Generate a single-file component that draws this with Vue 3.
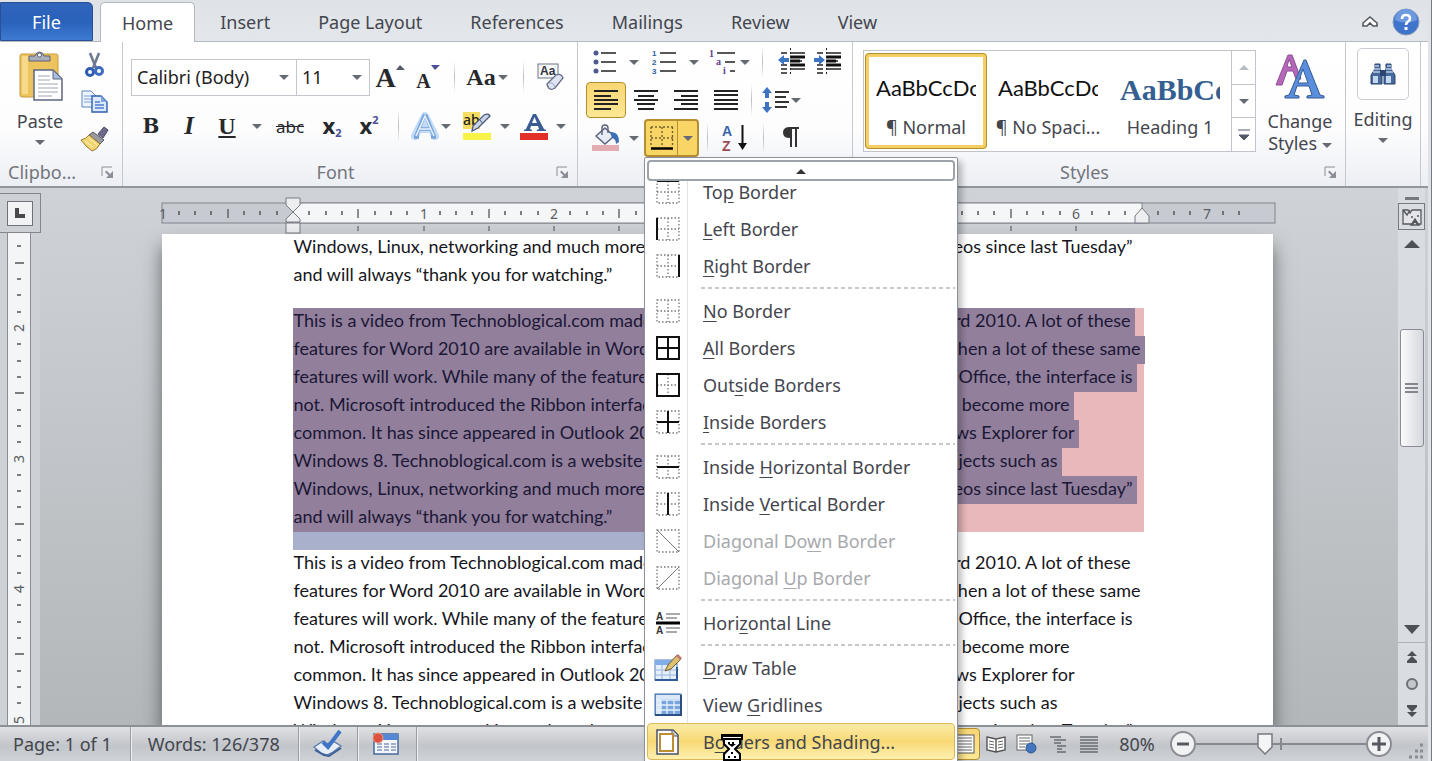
<template>
  <div class="word">
    <nav class="tabs">
      <button class="file-tab">File</button>
      <button v-for="tab in tabs" :key="tab" class="tab" :class="{ active: tab === activeTab }" @click="activeTab = tab">
        {{ tab }}
      </button>
      <div class="tabs-right">
        <button class="plain" aria-label="Minimize the Ribbon">
          <svg width="16" height="14" viewBox="0 0 16 14"><path d="M1 11V8l7-6 7 6v3h-4L8 8l-3 3z" fill="#fff" stroke="#55585f" stroke-width="1.6" /></svg>
        </button>
        <button class="plain" aria-label="Help">
          <svg width="28" height="28" viewBox="0 0 28 28">
            <circle cx="14" cy="14" r="13" fill="#3f74cc" stroke="#8c9bb8" />
            <path d="M3 12a11 11 0 0 1 22 0q-11 5-22 0" fill="#6c99e0" />
            <path d="M10 11q0-4 4-4t4 3.500q0 2-2 3.200T14 17" fill="none" stroke="#fff" stroke-width="2.600" />
            <rect x="12.500" y="19" width="3" height="3" fill="#fff" />
          </svg>
        </button>
      </div>
    </nav>

    <section class="ribbon">
      <div class="group clipboard">
        <div class="body">
          <button class="paste">
            <svg width="46" height="52" viewBox="0 0 46 52">
              <rect x="3" y="4" width="38" height="43" rx="2" fill="#edc35d" stroke="#c89a3c" />
              <path d="M5 6h6v38H5z" fill="#f6d98b" />
              <path d="M12 11V6h6q1-4 4.500-4T27 6h6v5z" fill="#a9aebd" stroke="#5c6275" />
              <circle cx="22.500" cy="5" r="2" fill="#fff" stroke="#5c6275" />
              <path d="M17 20h19l9 9v21H17z" fill="#fff" stroke="#5d6780" stroke-width="1.500" />
              <path d="M36 20v9h9z" fill="#a8bde2" stroke="#5d6780" />
              <path d="M21 26h12M21 30h12M21 34h20M21 38h20M21 42h20M21 46h14" stroke="#9da5b5" />
            </svg>
            <span>Paste</span>
            <i class="caret"></i>
          </button>
          <div class="stack">
            <button class="plain" aria-label="Cut">
              <svg width="20" height="26" viewBox="0 0 20 26">
                <path d="M5 1l6 15M14 1L8 16" stroke="#6f7a92" stroke-width="2.600" />
                <circle cx="5" cy="20" r="3.500" fill="none" stroke="#2f5cb0" stroke-width="3" />
                <circle cx="14" cy="19" r="3.500" fill="none" stroke="#3d6bbf" stroke-width="3" />
              </svg>
            </button>
            <button class="plain" aria-label="Copy">
              <svg width="28" height="24" viewBox="0 0 28 24">
                <path d="M1 1h9l5 5v11H1z" fill="#eef4fd" stroke="#5d84c4" />
                <path d="M3 6h8M3 9h8M3 12h8" stroke="#7fa2d8" />
                <path d="M11 6h9l6 6v10H11z" fill="#dce9fb" stroke="#2f5eac" stroke-width="1.400" />
                <path d="M20 6v6h6z" fill="#7ea6e4" />
                <path d="M14 12h5M14 15h9M14 18h9" stroke="#4f7fcb" stroke-width="1.400" />
              </svg>
            </button>
            <button class="plain" aria-label="Format Painter">
              <svg width="30" height="26" viewBox="0 0 30 26">
                <path d="M18 8l6-7 4 3-5 8z" fill="#6d6a8c" stroke="#4c4a6b" />
                <path d="M13 6l11 8-4 4L9 9z" fill="#9a9a9f" stroke="#56565c" />
                <path d="M9 9l11 9q-3 6-8 7Q5 20 1 14q5-1 8-5z" fill="#f3d574" stroke="#9b7c2c" />
                <path d="M5 15l8 6M9 12l8 7" stroke="#fff3bd" />
              </svg>
            </button>
          </div>
        </div>
        <div class="title"><span class="clip-title">Clipbo...</span><button class="launcher" aria-label="Clipboard options"><LauncherIcon /></button></div>
      </div>

      <div class="group font">
        <div class="body column">
          <div class="row font-top">
            <label class="combo name"><select aria-label="Font"><option>Calibri (Body)</option><option>Cambria</option></select><i class="caret"></i></label>
            <label class="combo size"><select aria-label="Font Size"><option>11</option><option>12</option></select><i class="caret"></i></label>
            <button class="tool w40 serif grow" aria-label="Grow Font">A<svg width="9" height="5"><path d="M0 5l4-5 5 5z" fill="#555a66" /></svg></button>
            <button class="tool w36 serif shrink" aria-label="Shrink Font">A<svg width="9" height="5"><path d="M0 0h9L4 5z" fill="#4c5098" /></svg></button>
            <i class="divider w16"></i>
            <button class="tool w50 serif case" aria-label="Change Case">Aa<i class="caret"></i></button>
            <i class="divider w22"></i>
            <button class="tool w34" aria-label="Clear Formatting">
              <svg width="28" height="28" viewBox="0 0 28 28">
                <rect x="1" y="1" width="20" height="14" fill="#f6f8fb" stroke="#6e7584" />
                <text x="3" y="12" font-family="Liberation Sans" font-size="12" font-weight="bold" fill="#33363e">Aa</text>
                <path d="M10 21l9-9q5-2 7 3l-8 10q-6 4-8-4z" fill="#dfe4f2" stroke="#626b85" stroke-width="1.300" />
                <path d="M12 20q5-1 6 5" fill="none" stroke="#9aa3bb" />
              </svg>
            </button>
          </div>
          <div class="row font-bottom">
            <button class="tool w40 serif bold" aria-label="Bold">B</button>
            <button class="tool w36 serif italic" aria-label="Italic">I</button>
            <button class="tool w40 serif underline" aria-label="Underline">U</button>
            <button class="tool w20" aria-label="Underline styles"><i class="caret"></i></button>
            <button class="tool w46 strike" aria-label="Strikethrough">abc</button>
            <button class="tool w38 script" aria-label="Subscript">x<sub>2</sub></button>
            <button class="tool w36 script" aria-label="Superscript">x<sup>2</sup></button>
            <i class="divider w22"></i>
            <button class="tool w32" aria-label="Text Effects">
              <svg width="28" height="30" viewBox="0 0 28 30">
                <path d="M4 25L14 5l10 20M9 18h10" fill="none" stroke="#c3dbf5" stroke-width="8" stroke-linejoin="round" stroke-linecap="round" />
                <path d="M3 26h5M20 26h5M5 25L13 5h2l8 20M9 18h10" fill="none" stroke="#78a4dc" stroke-width="3.500" />
                <path d="M5 25L14 5l9 20M9 18h10" fill="none" stroke="#e9f3fd" stroke-width="1.500" />
              </svg>
            </button>
            <button class="tool w10" aria-label="Text Effects menu"><i class="caret"></i></button>
            <button class="tool w32 marker" aria-label="Text Highlight Color">
              <svg width="30" height="30" viewBox="0 0 30 30">
                <rect x="1" y="1" width="17" height="17" fill="#f7dd62" />
                <text x="1" y="14" font-family="Noto Sans" font-size="14" font-weight="500" fill="#222">ab</text>
                <path d="M11 15l11-11q5-2 6 1L16 17l-6 3z" fill="#cbd5ea" stroke="#4c5977" stroke-width="1.300" />
                <path d="M18 9l3 4" stroke="#4c5977" />
                <rect x="1" y="22" width="28" height="7" fill="#f8f346" />
              </svg>
            </button>
            <button class="tool w24" aria-label="Highlight colors"><i class="caret"></i></button>
            <button class="tool w34" aria-label="Font Color">
              <svg width="28" height="30" viewBox="0 0 28 30">
                <path d="M4 20h8v-1l-2-1 1-3h7l1 3-2 1v1h9v-1l-2-1L16 3h-3L6 18l-2 1zM12 12l2.500-6 2.500 6z" fill="#3a5b94" />
                <rect x="0" y="22" width="28" height="7" fill="#e23029" />
              </svg>
            </button>
            <button class="tool w20" aria-label="Font colors"><i class="caret"></i></button>
          </div>
        </div>
        <div class="title"><span>Font</span><button class="launcher" aria-label="Font options"><LauncherIcon /></button></div>
      </div>

      <div class="group paragraph">
        <div class="body column">
          <div class="row">
            <button class="tool w38" aria-label="Bullets">
              <svg width="24" height="24" viewBox="0 0 24 24">
                <g fill="#4d5a8d"><circle cx="3" cy="3" r="2.500" /><circle cx="3" cy="12" r="2.500" /><circle cx="3" cy="21" r="2.500" /></g>
                <path d="M8 3h15M8 12h15M8 21h15" stroke="#222" stroke-width="1.600" />
              </svg>
            </button>
            <button class="tool w20" aria-label="Bullet library"><i class="caret"></i></button>
            <button class="tool w40" aria-label="Numbering">
              <svg width="26" height="28" viewBox="0 0 26 28">
                <g font-family="Liberation Sans" font-size="8" font-weight="bold" fill="#2e5d9f"><text x="1" y="8">1</text><text x="1" y="17">2</text><text x="1" y="26">3</text></g>
                <path d="M9 5h16M9 14h16M9 23h16" stroke="#222" stroke-width="1.600" />
              </svg>
            </button>
            <button class="tool w20" aria-label="Numbering library"><i class="caret"></i></button>
            <button class="tool w36" aria-label="Multilevel List">
              <svg width="28" height="28" viewBox="0 0 28 28">
                <g font-family="Liberation Serif" font-size="10" font-weight="bold" fill="#5b3f8f"><text x="1" y="9">1</text><text x="8" y="17">a</text><text x="15" y="26">i</text></g>
                <path d="M9 5h18M17 14h10M22 23h5" stroke="#222" stroke-width="1.600" />
              </svg>
            </button>
            <button class="tool w10" aria-label="List library"><i class="caret"></i></button>
            <i class="divider w24"></i>
            <button v-for="dir in ['Decrease', 'Increase']" :key="dir" class="tool w36" :aria-label="dir + ' Indent'">
              <svg width="28" height="28" viewBox="0 0 28 28">
                <path d="M3 5h6M12 5h15M14 13h10M12 21h15M3 21h6M3 17h6M3 25h6" stroke="#222" stroke-width="1.600" />
                <path d="M12 9h15M12 13h10M12 17h15" stroke="#111" stroke-width="2.800" />
                <path d="M12.500 0v28" stroke="#222" stroke-dasharray="2 2" />
                <path v-if="dir === 'Decrease'" d="M0 12l6-5v3h5v4H6v3z" fill="#3d74c2" />
                <path v-else d="M11 12L5 7v3H0v4h5v3z" fill="#3d74c2" />
              </svg>
            </button>
          </div>
          <div class="row">
            <button v-for="(d, name) in aligns" :key="name" class="tool w40" :class="{ checked: name === 'Left' }" :aria-label="'Align ' + name">
              <svg width="26" height="22" viewBox="0 0 26 22"><path :d="d" stroke="#222" stroke-width="2" /></svg>
            </button>
            <i class="divider w10"></i>
            <button class="tool w50 spacing" aria-label="Line Spacing">
              <svg width="28" height="28" viewBox="0 0 28 28">
                <path d="M5 1l5 6H7v5H3V7H0zM5 27l5-6H7v-5H3v5H0z" fill="#3d74c2" />
                <path d="M13 6h14M13 11h11M13 16h14M13 21h12" stroke="#333" stroke-width="1.800" />
              </svg>
              <i class="caret"></i>
            </button>
          </div>
          <div class="row">
            <button class="tool w40" aria-label="Shading">
              <svg width="28" height="28" viewBox="0 0 28 28">
                <rect x="0" y="21" width="27" height="6" fill="#e3acb0" />
                <path d="M4 12l9-8 9 8-9 8z" fill="#e8ecf4" stroke="#59617a" stroke-width="1.400" />
                <path d="M10 11V4q0-3 3-3t3 3v5" fill="none" stroke="#59617a" stroke-width="1.400" />
                <path d="M18 8q9-1 9 10l-3 2q0-5-4-6z" fill="#3c6fb8" />
              </svg>
            </button>
            <button class="tool w16" aria-label="Shading colors"><i class="caret"></i></button>
            <div class="border-split">
              <button class="split-main" aria-label="Bottom Border">
                <svg width="24" height="24" viewBox="0 0 24 24">
                  <path d="M1 1h22M1 12h22M1 1v20M12 1v20M22.500 1v20" stroke="#6d6330" stroke-width="1.400" stroke-dasharray="2 2" />
                  <path d="M1 22.500h22" stroke="#000" stroke-width="2.500" />
                </svg>
              </button>
              <button class="split-arrow" aria-label="Border menu" @click="menuOpen = !menuOpen"><i class="caret"></i></button>
              <div v-if="menuOpen" class="menu">
                <button class="scroll-up" aria-label="Scroll up"><svg width="10" height="6"><path d="M0 6l5-5 5 5z" fill="#333" /></svg></button>
                <div class="menu-clip">
                  <ul>
                    <template v-for="item in menuItems" :key="item.text">
                      <li v-if="item.sep" class="sep" role="separator"></li>
                      <li>
                        <button class="item" :class="{ hot: item.hot }" :disabled="item.disabled">
                          <span class="item-icon">
                            <svg v-if="item.solid !== undefined" width="24" height="24" viewBox="0 0 24 24">
                              <path v-if="!item.full" :d="item.disabled ? boxDots : gridDots" fill="none" stroke="#777" stroke-width="1.300" stroke-dasharray="1.500 2" />
                              <path :d="item.solid" fill="none" :stroke="item.disabled ? '#777' : '#111'" :stroke-width="item.disabled ? 1 : 2" />
                            </svg>
                            <svg v-else-if="item.icon === 'line'" width="26" height="24" viewBox="0 0 26 24">
                              <g font-family="Liberation Sans" font-size="10" font-weight="bold" fill="#333"><text x="1" y="9">A</text><text x="1" y="23">A</text></g>
                              <path d="M11 3h14M11 7h11M11 17h14M11 21h11" stroke="#555" stroke-width="1.200" />
                              <path d="M1 12h24" stroke="#000" stroke-width="3" />
                            </svg>
                            <svg v-else-if="item.icon === 'draw'" width="28" height="28" viewBox="0 0 28 28">
                              <rect x="1" y="6" width="22" height="20" fill="#e5eefb" stroke="#5f7eae" />
                              <path d="M1 6h22v5H1z" fill="#81aee8" />
                              <path d="M1 16h22M1 21h22M8 11v15M16 11v15" stroke="#9cb6dc" />
                              <path d="M1 26h22V13" fill="none" stroke="#315b96" stroke-width="2" />
                              <path d="M11 17l3-6L23 1l4 4-10 10z" fill="#dec070" stroke="#6f5d35" />
                              <path d="M22 2l2-2 4 4-2 2z" fill="#c57a7a" />
                            </svg>
                            <svg v-else-if="item.icon === 'grid'" width="28" height="24" viewBox="0 0 28 24">
                              <rect x="1" y="1" width="26" height="21" fill="#79a5df" stroke="#426a9f" />
                              <path d="M2 2h24v4H2zM2 2h5v19H2z" fill="#dbe8f8" />
                              <path d="M7 7v14M13 7v14M20 7v14M2 7h24M2 12h24M2 17h24" stroke="#e4effb" stroke-width="1.300" />
                              <path d="M1 22h26V2" fill="none" stroke="#294f85" stroke-width="2" />
                            </svg>
                            <svg v-else width="24" height="26" viewBox="0 0 24 26">
                              <path d="M1 1h16l5 5v19H1z" fill="#fdfdfd" stroke="#4a5068" stroke-width="1.500" />
                              <path d="M16 1v6h6" fill="#cfd6e6" stroke="#4a5068" />
                              <rect x="4" y="5" width="13" height="17" fill="#fff" stroke="#bd8d33" stroke-width="2" />
                            </svg>
                          </span>
                          <span class="item-text">{{ item.text.split('_')[0] }}<u>{{ item.text.split('_')[1][0] }}</u>{{ item.text.split('_')[1].slice(1) }}</span>
                        </button>
                      </li>
                    </template>
                  </ul>
                </div>
                <svg class="hourglass" width="24" height="30" viewBox="0 0 24 30">
                  <path d="M2 2h20v4h-2v5l-5 5 5 5v6H4v-6l5-5-5-5V6H2z" fill="#fff" stroke="#000" stroke-width="2" />
                  <path d="M2 3h20M5 6h14" stroke="#000" stroke-width="2" />
                  <path d="M8 9h2v2h2V9h2v2h2l-4 3-4-3zM11 19h2v2h-2zM8 23h2v2H8zM14 23h2v2h-2z" fill="#000" />
                </svg>
              </div>
            </div>
            <i class="divider w16"></i>
            <button class="tool w40" aria-label="Sort">
              <svg width="28" height="30" viewBox="0 0 28 30">
                <g font-family="Liberation Sans" font-size="14" font-weight="bold"><text x="1" y="13" fill="#3a66ad">A</text><text x="1" y="28" fill="#9d4a50">Z</text></g>
                <path d="M21.500 2v20" stroke="#111" stroke-width="2" /><path d="M17 20h9l-4.500 7z" fill="#111" />
              </svg>
            </button>
            <i class="divider w16"></i>
            <button class="tool w40" aria-label="Show paragraph marks">
              <svg width="18" height="24" viewBox="0 0 18 24"><path d="M8 12Q1 12 1 6.500T8 1h9v2h-2v18h-2V3h-3v18H8z" fill="#333" /></svg>
            </button>
          </div>
        </div>
      </div>

      <div class="group styles">
        <div class="body">
          <div class="gallery">
            <button class="style checked"><span class="sample">AaBbCcDc</span><span>¶ Normal</span></button>
            <button class="style"><span class="sample">AaBbCcDc</span><span>¶ No Spaci...</span></button>
            <button class="style"><span class="sample heading">AaBbCc</span><span>Heading 1</span></button>
            <div class="gallery-nav">
              <button aria-label="Row up" disabled><svg width="10" height="5"><path d="M0 5l5-5 5 5z" fill="#b9bdc4" /></svg></button>
              <button aria-label="Row down"><i class="caret"></i></button>
              <button aria-label="More styles"><svg width="12" height="12"><path d="M0 1h12M1 6h10l-5 5z" fill="#555a66" stroke="#555a66" stroke-width="1" /></svg></button>
            </div>
          </div>
          <button class="change">
            <svg width="52" height="50" viewBox="0 0 52 50">
              <path d="M2 33L14 3h4l9 24h-5l-3-8h-6l-5 14zM13 15h5l-3-8z" fill="#b568b8" stroke="#8e4c98" />
              <path d="M11 46v-2l4-1L30 8h2l14 35 4 1v2H33v-2l5-1-3-9H23l-3 9 5 1v2zM24 31h10l-5-14z" fill="#5b8edc" stroke="#345a94" />
            </svg>
            <span>Change</span>
            <span>Styles <i class="caret"></i></span>
          </button>
        </div>
        <div class="title"><span>Styles</span><button class="launcher" aria-label="Styles options"><LauncherIcon /></button></div>
      </div>

      <div class="group editing">
        <button class="edit">
          <span class="edit-icon">
            <svg width="28" height="26" viewBox="0 0 28 26">
              <path d="M6 3h5v5l2 6v9H2v-9l4-6zM17 3h5v5l4 6v9H15v-9l2-6z" fill="#48699b" stroke="#2b4672" />
              <rect x="11" y="9" width="6" height="6" fill="#2b4672" />
              <path d="M4 15h5v7H4zM17 15h5v7h-5z" fill="#c6d8f0" />
              <path d="M5 8h6M17 8h6M6 5h4M18 5h4M4 11h7M17 11h7" stroke="#b5c8e4" stroke-width="1.300" />
            </svg>
          </span>
          <span>Editing</span>
          <i class="caret"></i>
        </button>
      </div>
    </section>

    <main class="workspace">
      <div class="left-bar">
        <button class="tab-stop" aria-label="Tab selector">
          <span><svg width="12" height="12"><path d="M3 1v8h8" fill="none" stroke="#4a4a4e" stroke-width="4" /></svg></span>
        </button>
        <svg class="v-ruler" width="24" height="493">
          <template v-for="n in 31" :key="n">
            <text v-if="(n + 2) % 8 === 0" :transform="`translate(16 ${vPos(n) + 4}) rotate(-90)`">{{ (n + 2) / 8 + 1 }}</text>
            <path v-else-if="(n + 2) % 4 === 0" :d="`M7 ${vPos(n)}h9`" stroke="#555" stroke-width="1.500" />
            <path v-else :d="`M9 ${vPos(n)}h4`" stroke="#555" stroke-width="1.500" />
          </template>
        </svg>
      </div>

      <div class="canvas">
        <div class="sheet">
          <svg class="h-ruler" height="46">
            <rect x="0" y="15" width="1113" height="20" fill="#c7cbd1" stroke="#80848b" />
            <rect x="131" y="15" width="849" height="20" fill="#f5f6f8" stroke="#80848b" />
            <template v-for="n in 67" :key="n">
              <text v-if="(n - 9) % 8 === 0 && n !== 9" :x="hPos(n)" y="31">{{ Math.abs((n - 9) / 8) }}</text>
              <path v-else-if="(n - 9) % 4 === 0 && n !== 9" :d="`M${hPos(n)} 21v9`" stroke="#555" stroke-width="1.300" />
              <path v-else-if="n !== 9 && n !== 61" :d="`M${hPos(n)} 23v4`" stroke="#555" stroke-width="1.500" />
            </template>
            <path v-for="n in 12" :key="'t' + n" :d="`M${hPos(9 + n * 4)} 38v5`" stroke="#6a6d73" stroke-width="1.300" />
            <path d="M124 10h14v7l-7 7-7-7zM131 24l7 7v3h-14v-3z" fill="#eceef0" stroke="#777b82" />
            <rect x="124" y="35" width="14" height="10" fill="#eceef0" stroke="#777b82" />
            <path d="M980 20l7 8v7h-14v-7z" fill="#eceef0" stroke="#777b82" />
          </svg>
          <article class="page">
            <div class="para">
              <p v-for="line in lines.slice(6)" :key="line.left" class="line" :style="{ width: line.width + 'px' }"><span>{{ line.left }}</span><span>{{ line.right }}</span></p>
            </div>
            <div class="para shaded">
              <p v-for="line in lines" :key="line.left" class="line" :style="{ width: line.width + 'px' }"><span>{{ line.left }}</span><span>{{ line.right }}</span></p>
            </div>
            <div class="gap-selected"></div>
            <div class="para">
              <p v-for="line in lines" :key="line.left" class="line" :style="{ width: line.width + 'px' }"><span>{{ line.left }}</span><span>{{ line.right }}</span></p>
            </div>
          </article>
        </div>
      </div>

      <div class="scroll">
        <i class="splitter"></i>
        <button class="ruler-toggle" aria-label="View Ruler">
          <svg width="22" height="22" viewBox="0 0 22 22"><path d="M2 18V4h5l2 3 2-3h9v14h-4l-2-3-2 3zM2 4l4 5 3-5M10 19l4-6 4 6zM10 11h2M16 10h2" fill="#e3e5e8" stroke="#55585f" stroke-width="1.300" /></svg>
        </button>
        <button class="step" aria-label="Scroll up"><svg width="16" height="9"><path d="M0 9l8-8 8 8z" fill="#4d5057" /></svg></button>
        <div class="track"><div class="thumb"><i></i><i></i><i></i></div></div>
        <button class="step" aria-label="Scroll down"><svg width="16" height="9"><path d="M0 0h16L8 9z" fill="#4d5057" /></svg></button>
        <div class="browse">
          <button class="step" aria-label="Previous Page"><svg width="10" height="12"><path d="M0 5l5-5 5 5zM0 10l5-5 5 5zM0 10h10v2H0z" fill="#4d5057" /></svg></button>
          <button class="step" aria-label="Select Browse Object"><svg width="14" height="14"><circle cx="7" cy="7" r="5" fill="#c3c6ca" stroke="#6d7076" stroke-width="2" /></svg></button>
          <button class="step" aria-label="Next Page"><svg width="10" height="12"><path d="M0 0h10v2H0zM0 2h10L5 7zM0 7h10l-5 5z" fill="#4d5057" /></svg></button>
        </div>
      </div>
    </main>

    <footer class="status">
      <button class="cell page-count">Page: 1 of 1</button>
      <button class="cell words">Words: 126/378</button>
      <button class="cell icon-cell" aria-label="Proofing">
        <svg width="30" height="28" viewBox="0 0 30 28">
          <path d="M1 17l9-6 4 3 6-3 8 5-8 6-6 3-6-2z" fill="#e8eef7" stroke="#5b78a8" stroke-width="1.300" />
          <path d="M2 20l9 5 5 1 12-8" fill="none" stroke="#3d6096" stroke-width="2" />
          <path d="M10 12l5 5L27 1" fill="none" stroke="#3f74c6" stroke-width="4" />
        </svg>
      </button>
      <button class="cell icon-cell" aria-label="Macro recording">
        <svg width="28" height="24" viewBox="0 0 28 24">
          <rect x="2" y="2" width="24" height="20" fill="#f4f7fc" stroke="#48699c" stroke-width="1.500" />
          <path d="M2 2h24v6H2z" fill="#5288d6" />
          <path d="M5 12h5M12 12h5M19 12h5M5 15h5M12 15h5M19 15h5M5 18h5M12 18h5M19 18h5" stroke="#8398bb" stroke-width="1.500" />
          <circle cx="6" cy="6" r="5" fill="#dd5140" stroke="#f09a80" />
        </svg>
      </button>
      <div class="status-right">
        <button class="view checked" aria-label="Print Layout"><svg width="20" height="20"><rect x="1" y="1" width="18" height="18" fill="#fff" stroke="#555" /><path d="M3 4h14M3 7h14M3 10h14M3 13h14M3 16h14" stroke="#666" /></svg></button>
        <button class="view" aria-label="Full Screen Reading"><svg width="20" height="20"><path d="M1 3l9 2 9-2v13l-9 2-9-2zM10 5v13" fill="#fff" stroke="#555" stroke-width="1.400" /><path d="M3 7l5 1M3 10l5 1M3 13l5 1M12 8l5-1M12 11l5-1M12 14l5-1" stroke="#666" /></svg></button>
        <button class="view" aria-label="Web Layout"><svg width="22" height="20"><rect x="1" y="1" width="15" height="15" fill="#fff" stroke="#666" /><path d="M3 4h11M3 7h11M3 10h9M3 13h6" stroke="#666" /><circle cx="15" cy="14" r="5" fill="#4474bd" stroke="#315894" /></svg></button>
        <button class="view" aria-label="Outline"><svg width="18" height="18"><path d="M1 2h11M5 5h12M5 8h7M8 11h9M8 14h5M8 17h9" stroke="#6a6d73" stroke-width="1.400" /></svg></button>
        <button class="view" aria-label="Draft"><svg width="18" height="18"><path d="M0 2h18M0 5h18M0 8h18M0 11h18M0 14h18M0 17h18" stroke="#6a6d73" stroke-width="1.400" /></svg></button>
        <button class="percent">{{ zoom }}%</button>
        <button class="round" aria-label="Zoom Out"><svg width="12" height="12"><path d="M0 6h12" stroke="#55585f" stroke-width="3" /></svg></button>
        <input v-model="zoom" type="range" min="10" max="187" aria-label="Zoom">
        <button class="round" aria-label="Zoom In"><svg width="14" height="14"><path d="M0 7h14M7 0v14" stroke="#55585f" stroke-width="3" /></svg></button>
        <svg class="grip" width="18" height="18"><path d="M14 2h3M9 8h3M14 8h3M3 14h3M9 14h3M14 14h3" stroke="#8b8f95" stroke-width="3" /></svg>
      </div>
    </footer>
  </div>
</template>

<script setup>
import { h, ref } from 'vue'

const tabs = ['Home', 'Insert', 'Page Layout', 'References', 'Mailings', 'Review', 'View']
const activeTab = ref('Home')
const menuOpen = ref(true)
const zoom = ref(80)

// small corner arrow in the group titles
const LauncherIcon = () => h('svg', { width: 13, height: 13 }, [
  h('path', { d: 'M1 10V1h10', fill: 'none', stroke: '#8b8e96' }),
  h('path', { d: 'M12 5v7H5l2.500-2.500L4 6l1.500-1.500L9 8z', fill: '#8b8e96' })
])

const aligns = {
  Left: 'M1 2h24M1 7h17M1 11h24M1 15h24M1 20h17',
  Center: 'M1 2h24M5 7h16M1 11h24M4 15h18M5 20h16',
  Right: 'M1 2h24M8 7h17M1 11h24M8 15h17M1 20h24',
  Justify: 'M1 2h24M1 6h24M1 11h24M1 15h24M1 20h24'
}

const boxDots = 'M1 1h22v22H1z'
const gridDots = 'M1 1h22v22H1zM1 12h22M12 1v22'

// the letter after "_" is the access key
const menuItems = [
  { text: 'To_p Border', solid: 'M1 1h22' },
  { text: '_Left Border', solid: 'M1 1v22' },
  { text: '_Right Border', solid: 'M23 1v22' },
  { text: '_No Border', solid: '', sep: true },
  { text: '_All Borders', solid: 'M1 1h22v22H1zM1 12h22M12 1v22', full: true },
  { text: 'Out_side Borders', solid: 'M1 1h22v22H1z' },
  { text: '_Inside Borders', solid: 'M1 12h22M12 1v22' },
  { text: 'Inside _Horizontal Border', solid: 'M1 12h22', sep: true },
  { text: 'Inside _Vertical Border', solid: 'M12 1v22' },
  { text: 'Diagonal Do_wn Border', solid: 'M1 1l22 22', disabled: true },
  { text: 'Diagonal _Up Border', solid: 'M23 1L1 23', disabled: true },
  { text: 'Hori_zontal Line', icon: 'line', sep: true },
  { text: '_Draw Table', icon: 'draw', sep: true },
  { text: 'View _Gridlines', icon: 'grid' },
  { text: 'B_orders and Shading...', icon: 'page', hot: true }
]

const lines = [
  { left: 'This is a video from Technoblogical.com made', right: 'Word 2010. A lot of these', width: 842 },
  { left: 'features for Word 2010 are available in Word', right: 'then a lot of these same', width: 852 },
  { left: 'features will work. While many of the features', right: 'Office, the interface is', width: 844 },
  { left: 'not. Microsoft introduced the Ribbon interface', right: 'become more', width: 781 },
  { left: 'common. It has since appeared in Outlook 2010', right: 'Windows Explorer for', width: 786 },
  { left: 'Windows 8. Technoblogical.com is a website', right: 'subjects such as', width: 769 },
  { left: 'Windows, Linux, networking and much more', right: 'videos since last Tuesday”', width: 844 },
  { left: 'and will always “thank you for watching.”', right: '', width: 400 }
]

// rulers: one inch is 130.5px, ticks every eighth
function hPos(n) {
  return Math.round(131 + (n - 9) * 130.5 / 8)
}
function vPos(n) {
  return Math.round(95 + (n - 6) * 130.5 / 8)
}
</script>

<style>
body {
  overflow: hidden;
}
</style>

<style scoped>
* {
  box-sizing: border-box;
}

.word {
  display: flex;
  flex-direction: column;
  height: 100vh;
  overflow: hidden;
  padding-right: 4px;
  background: linear-gradient(to left, #777b83 1px, #dfe3e8 1px);
  font-family: "Noto Sans", "Open Sans", sans-serif;
  font-size: 18px;
  color: #44464e;
}

button {
  font: inherit;
  color: inherit;
  padding: 0;
  border: 0;
  background: none;
}

svg {
  display: block;
  flex: none;
  overflow: visible;
}

.caret {
  display: inline-block;
  flex: none;
  border: 5px solid transparent;
  border-top-color: #666a72;
  border-bottom: 0;
}

/* tabs */
.tabs {
  display: flex;
  flex: 0 0 42px;
  gap: 2px;
  padding-top: 2px;
  background: linear-gradient(#dfe2e6, #e3e6ea);
  border-bottom: 1px solid #b4b8bf;
}

.file-tab {
  width: 93px;
  margin-right: 5px;
  border: 1px solid #2a4f92;
  border-radius: 0 5px 0 0;
  background: linear-gradient(#3065bb, #2a61b9 50%, #3d7bd2);
  color: #fff;
}

.tab {
  padding: 0 22px;
  border: 1px solid transparent;
  border-bottom: 0;
}

.tab.active {
  margin-bottom: -1px;
  padding: 0 21px;
  border-color: #b4b8bf;
  border-radius: 5px 5px 0 0;
  background: #fff;
}

.tabs-right {
  display: flex;
  align-items: center;
  gap: 14px;
  margin-left: auto;
  padding-right: 8px;
}

/* ribbon */
.ribbon {
  display: flex;
  flex: 0 0 146px;
  border-bottom: 2px solid #92969d;
  background: linear-gradient(#fff, #fdfdfe 60%, #eceff4);
}

.group {
  display: flex;
  flex-direction: column;
  border-right: 1px solid #c5c8ce;
}

.body {
  display: flex;
  height: 116px;
}

.body.column {
  flex-direction: column;
}

.title {
  display: flex;
  align-items: center;
  height: 28px;
  color: #73757c;
}

.title span {
  flex: 1;
  text-align: center;
}

.title .clip-title {
  text-align: left;
}

.launcher {
  margin-right: 8px;
}

.clipboard {
  flex: 0 0 123px;
}

.clipboard .title {
  padding-left: 8px;
}

.paste {
  display: flex;
  flex-direction: column;
  align-items: center;
  width: 80px;
  padding-top: 8px;
  line-height: 26px;
}

.paste svg {
  margin-bottom: 6px;
}

.paste .caret {
  margin-top: 6px;
}

.stack {
  display: flex;
  flex-direction: column;
  align-items: center;
  gap: 12px;
  padding: 10px 0 0;
  width: 30px;
}

.row {
  display: flex;
  align-items: center;
  height: 38px;
}

.tool {
  display: flex;
  align-items: center;
  justify-content: center;
  flex: none;
  height: 36px;
  color: #26282c;
}

.w10 { width: 10px; }
.w16 { width: 16px; }
.w20 { width: 20px; }
.w22 { width: 22px; }
.w24 { width: 24px; }
.w32 { width: 32px; }
.w34 { width: 34px; }
.w36 { width: 36px; }
.w38 { width: 38px; }
.w40 { width: 40px; }
.w46 { width: 46px; }
.w50 { width: 50px; }

.divider {
  flex: none;
  height: 32px;
  background: linear-gradient(transparent, #b9bcc3, transparent) center / 1px 100% no-repeat;
}

.font {
  flex: 0 0 455px;
  padding-left: 8px;
}

.font .title {
  margin-left: -16px;
}

.font-top {
  margin-top: 16px;
}

.font-bottom {
  margin-top: 11px;
}

.combo {
  display: flex;
  align-items: center;
  height: 37px;
  border: 1px solid #c3c6cc;
  background: #fff;
}

.combo.name {
  width: 166px;
}

.combo.size {
  width: 73px;
  border-left: 0;
}

.combo select {
  flex: 1;
  width: 100%;
  min-width: 0;
  padding: 0 0 0 5px;
  border: 0;
  appearance: none;
  background: none;
  font: inherit;
  color: #222;
}

.combo .caret {
  margin-right: 7px;
}

.serif {
  font-family: "Liberation Serif", serif;
  font-weight: bold;
}

.grow {
  align-items: flex-start;
  font-size: 28px;
  line-height: 38px;
}

.shrink {
  align-items: flex-start;
  font-size: 20px;
  line-height: 44px;
}

.grow svg,
.shrink svg {
  margin-top: 6px;
}

.case {
  font-size: 24px;
  gap: 2px;
}

.bold {
  font-family: "DejaVu Serif", serif;
  font-size: 20px;
}

.italic {
  font-size: 25px;
  font-style: italic;
}

.underline {
  font-size: 24px;
  text-decoration: underline;
}

.strike {
  font-size: 17px;
  text-decoration: line-through;
}

.script {
  align-items: baseline;
  font-size: 22px;
  font-weight: bold;
  line-height: 34px;
}

.script sub,
.script sup {
  font-size: 11px;
  line-height: 1;
  color: #4a4f96;
}

.script sup {
  align-self: flex-start;
  margin-top: 6px;
}

.script sub {
  align-self: flex-end;
  margin-bottom: 6px;
}

.marker {
  margin-left: 10px;
}

.paragraph {
  flex: 0 0 275px;
  padding: 1px 0 0 8px;
}

.checked {
  border: 1px solid #b48e32;
  border-radius: 4px;
  background: linear-gradient(#f8d673, #fbe08a 60%, #fde892);
}

.spacing {
  gap: 1px;
}

.border-split {
  position: relative;
  z-index: 10;
  display: flex;
  width: 55px;
  height: 38px;
  margin-left: 2px;
  border: 2px solid #b48e32;
  border-radius: 4px;
  background: #f9d566;
}

.split-main {
  display: flex;
  flex: 1;
  align-items: center;
  justify-content: center;
  border-right: 1px solid #b48e32;
}

.split-arrow {
  display: flex;
  align-items: center;
  justify-content: center;
  width: 19px;
}

/* border menu, hangs below its button */
.menu {
  position: absolute;
  top: 36px;
  left: -2px;
  width: 314px;
  padding: 2px;
  border: 1px solid #8d9199;
  border-radius: 2px;
  background: #fff;
  box-shadow: 4px 4px 6px rgba(0, 0, 0, 0.25);
}

.scroll-up {
  display: flex;
  align-items: center;
  justify-content: center;
  width: 100%;
  height: 21px;
  border: 2px solid #9ea2aa;
  border-radius: 4px;
  background: #fff;
}

.menu-clip {
  overflow: hidden;
  background: linear-gradient(to right, transparent 40px, #e1e3e6 40px, #e1e3e6 41px, transparent 41px);
}

.menu-clip ul {
  margin: -8px 0 0;
  padding: 0;
  list-style: none;
}

.sep {
  height: 8px;
  margin-left: 54px;
  background: repeating-linear-gradient(to right, #c5c8cd 0 4px, transparent 4px 7px) left 3px / 100% 2px no-repeat;
}

.item {
  display: flex;
  align-items: center;
  width: 100%;
  height: 37px;
  border: 1px solid transparent;
  border-radius: 4px;
  text-align: left;
}

.item:disabled {
  color: #a7a9ad;
}

.item.hot {
  border-color: #dcb758;
  background: linear-gradient(#fbeaa8, #f8da75 50%, #fdf0b0);
}

.item-icon {
  display: flex;
  justify-content: center;
  width: 40px;
}

.item-text {
  padding-left: 15px;
}

.item-text u {
  text-underline-offset: 3px;
}

.hourglass {
  position: absolute;
  left: 75px;
  bottom: -1px;
}

/* styles */
.styles {
  flex: 1 0 auto;
}

.styles .title {
  margin-left: -8px;
}

.styles .body {
  padding: 8px 0 0 10px;
}

.gallery {
  display: flex;
  height: 102px;
  padding-left: 1px;
  border: 1px solid #c1c4ca;
  background: #fff;
}

.style {
  display: flex;
  flex-direction: column;
  align-items: center;
  justify-content: space-between;
  width: 122px;
  margin: 2px 0;
  padding: 22px 0 9px;
  line-height: 26px;
  white-space: nowrap;
}

.style.checked {
  padding: 18px 0 5px;
  border: 4px solid #f4cf62;
  outline: 1px solid #b48e32;
  outline-offset: -1px;
  background: #fff;
}

.sample {
  width: 100px;
  overflow: hidden;
  font-family: Lato, sans-serif;
  font-size: 22px;
  text-align: left;
  color: #111;
}

.sample.heading {
  font-family: "Liberation Serif", serif;
  font-size: 30px;
  font-weight: bold;
  line-height: 30px;
  color: #365f91;
}

.gallery-nav {
  display: flex;
  flex-direction: column;
  width: 24px;
  border-left: 1px solid #c1c4ca;
}

.gallery-nav button {
  display: flex;
  flex: 1;
  align-items: center;
  justify-content: center;
}

.gallery-nav button + button {
  border-top: 1px solid #c1c4ca;
}

.change {
  display: flex;
  flex-direction: column;
  align-items: center;
  width: 88px;
  line-height: 22px;
}

.change svg {
  margin: 2px 0 8px;
}

.change .caret {
  vertical-align: middle;
}

.editing {
  flex: 0 0 75px;
  margin-right: 7px;
}

.edit {
  display: flex;
  flex-direction: column;
  align-items: center;
  padding-top: 6px;
  line-height: 26px;
}

.edit-icon {
  display: flex;
  align-items: center;
  justify-content: center;
  width: 52px;
  height: 52px;
  margin-bottom: 6px;
  border: 1px solid #c9ccd3;
  border-radius: 5px;
}

.edit .caret {
  margin-top: 6px;
}

/* document area */
.workspace {
  display: grid;
  flex: 1;
  grid-template-columns: 40px 1fr 34px;
  min-height: 0;
  overflow: hidden;
  background: linear-gradient(#cfd3d8, #b3b7ba);
}

.left-bar {
  display: flex;
  flex-direction: column;
  align-items: flex-start;
  padding-top: 5px;
  background: #cdd1d6;
}

.tab-stop {
  flex: none;
  width: 41px;
  height: 40px;
  padding: 6px 7px;
  border: 1px solid #83868d;
  border-left: 0;
}

.tab-stop span {
  display: flex;
  align-items: center;
  justify-content: center;
  height: 25px;
  border: 1px solid #6f7278;
  background: #f2f3f5;
}

.v-ruler {
  margin-left: 7px;
  border: solid #898d94;
  border-width: 0 1px;
  background: #f4f5f7;
}

.v-ruler text,
.h-ruler text {
  font-size: 14px;
  fill: #5a5d63;
}

.h-ruler text {
  text-anchor: middle;
}

.canvas {
  display: flex;
  justify-content: center;
  min-width: 0;
  overflow: hidden;
}

.sheet {
  display: flex;
  flex: 0 1 1111px;
  flex-direction: column;
}

.h-ruler {
  width: 100%;
}

.page {
  flex: 1;
  min-height: 0;
  overflow: hidden;
  padding-left: 131px;
  background: #fff;
  box-shadow: 0 12px 18px rgba(0, 0, 0, 0.5);
  font-family: Lato, sans-serif;
  color: #16161c;
}

.para {
  width: 851px;
  margin-bottom: 18px;
}

.line {
  display: flex;
  justify-content: space-between;
  margin: 0;
  padding: 0 4px 4px 1px;
  line-height: 24px;
  white-space: nowrap;
}

.shaded {
  margin-bottom: 0;
  background: #e8b8ba;
  color: #1b1734;
}

.shaded .line {
  background: #927f9c;
}

.gap-selected {
  width: 400px;
  height: 18px;
  background: #a8b0cc;
}

/* scroll bar */
.scroll {
  display: flex;
  flex-direction: column;
  align-items: center;
  margin: 0 3px 0 4px;
  background: #d9dce0;
}

.splitter {
  width: 14px;
  height: 3px;
  margin: 9px 0 3px;
  background: #777a80;
}

.ruler-toggle {
  display: flex;
  align-items: center;
  justify-content: center;
  width: 27px;
  height: 27px;
  border: 1px solid #777a80;
}

.step {
  display: flex;
  align-items: center;
  justify-content: center;
  flex: 0 0 26px;
}

.track {
  flex: 1;
  padding: 73px 0 0;
}

.thumb {
  display: flex;
  flex-direction: column;
  align-items: center;
  justify-content: center;
  gap: 2px;
  width: 24px;
  height: 118px;
  border: 1px solid #888c94;
  border-radius: 3px;
  background: linear-gradient(to right, #fafafb, #d5d8dd);
}

.thumb i {
  width: 13px;
  height: 2px;
  background: #83868c;
}

.browse {
  display: flex;
  flex-direction: column;
  align-items: center;
  width: 100%;
  padding-bottom: 2px;
  border-top: 1px solid #aeb1b7;
}

.browse .step {
  flex-basis: 27px;
}

/* status bar */
.status {
  display: flex;
  flex: 0 0 36px;
  border-top: 2px solid #8c9096;
  background: linear-gradient(#dfe1e4, #c2c5ca 55%, #cfd2d6);
}

.cell {
  padding: 0 18px 0 17px;
  border-right: 1px solid #9a9ea5;
  box-shadow: 1px 0 #eceef0;
}

.page-count {
  padding: 0 18px 0 13px;
}

.icon-cell {
  width: 59px;
  padding: 0 14px;
}

.status-right {
  display: flex;
  align-items: center;
  margin-left: auto;
  padding-right: 4px;
}

.view {
  display: flex;
  align-items: center;
  justify-content: center;
  width: 31px;
  height: 32px;
}

.percent {
  width: 42px;
  margin: 0 12px;
}

.round {
  display: flex;
  align-items: center;
  justify-content: center;
  width: 26px;
  height: 26px;
  border: 2px solid #8a8d93;
  border-radius: 50%;
  background: #f1f2f4;
}

.status input {
  width: 170px;
  height: 26px;
  margin: 0;
  appearance: none;
  background: linear-gradient(#85888f, #85888f) center / 100% 2px no-repeat, linear-gradient(#85888f, #85888f) 84px center / 2px 12px no-repeat;
}

.status input::-webkit-slider-thumb {
  appearance: none;
  width: 16px;
  height: 22px;
  background: url("data:image/svg+xml,%3Csvg xmlns='http://www.w3.org/2000/svg' width='16' height='22'%3E%3Cpath d='M1 1h14v13l-7 7-7-7z' fill='%23f4f5f6' stroke='%23777a80' stroke-width='1.500'/%3E%3C/svg%3E");
}

.grip {
  align-self: flex-end;
  margin-left: 14px;
}
</style>
